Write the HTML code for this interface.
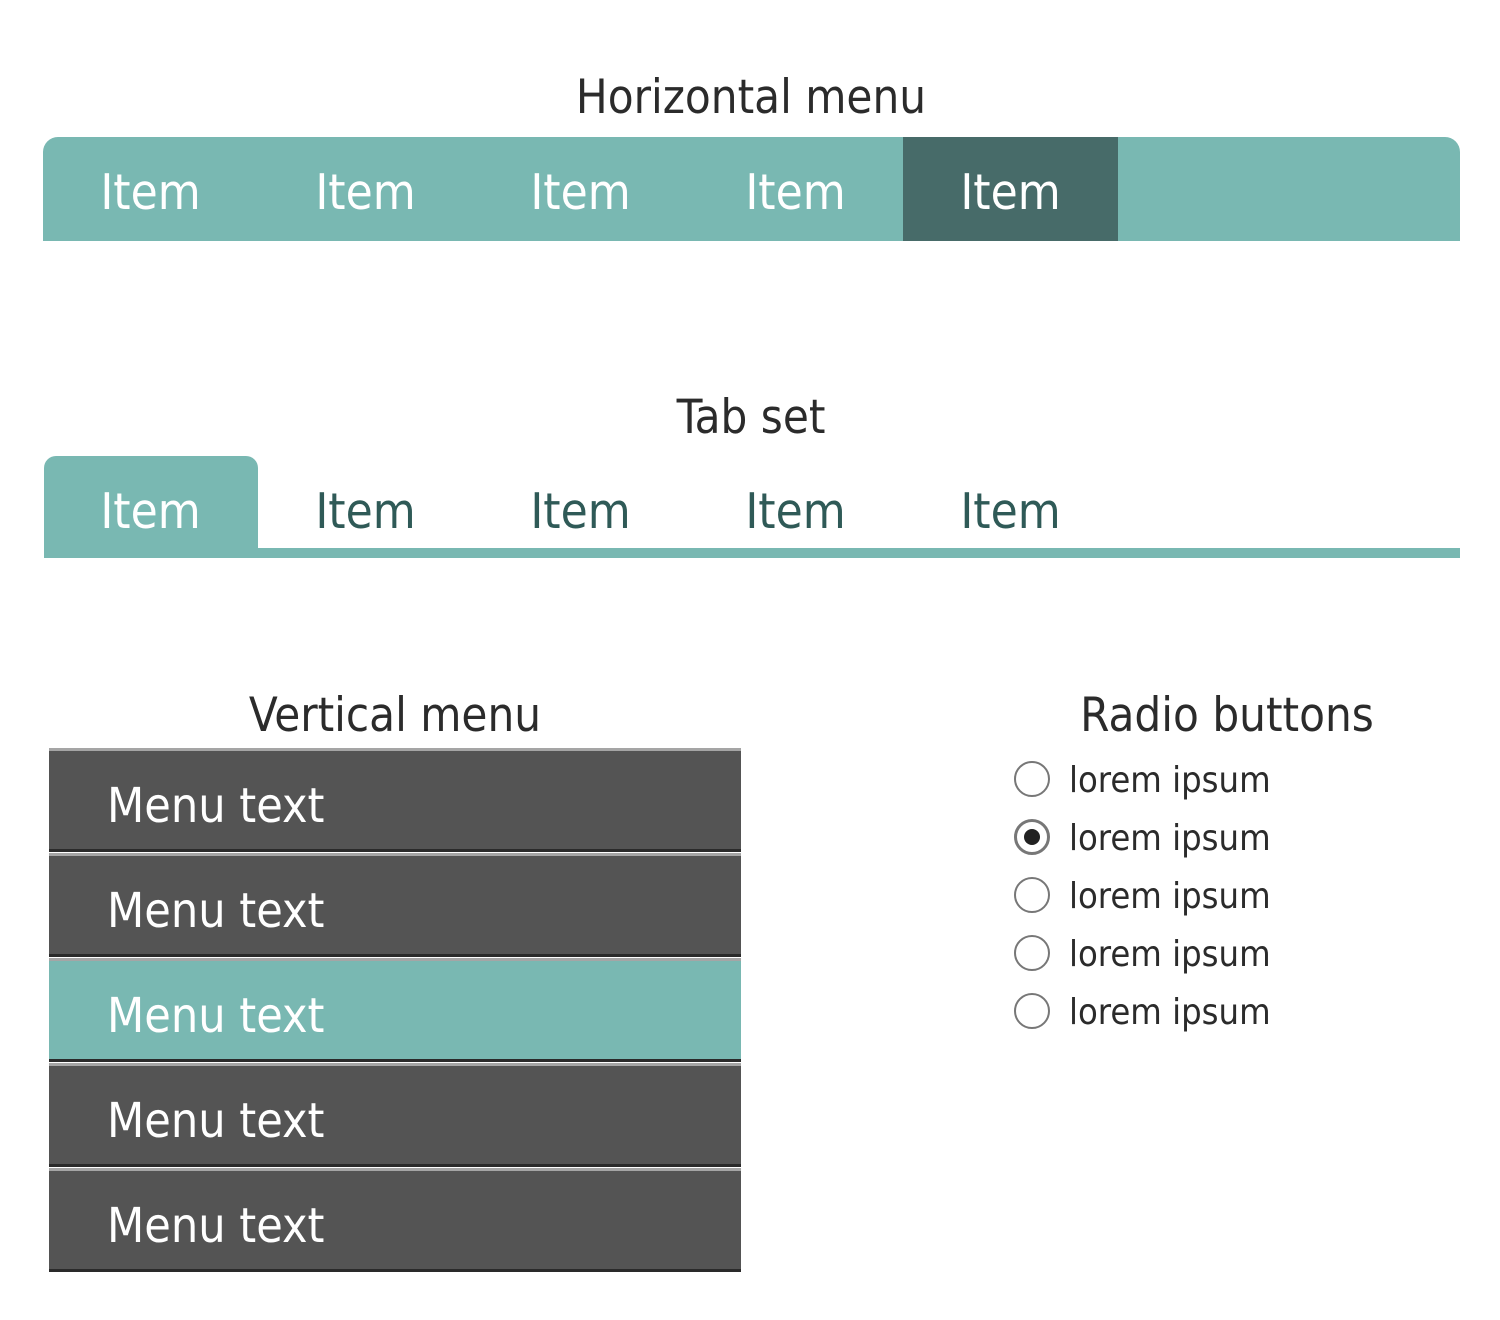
<!DOCTYPE html>
<html><head><style>
body{margin:0;width:1500px;height:1320px;background:#fff;position:relative;font-family:"DejaVu Sans Condensed","DejaVu Sans","Liberation Sans",sans-serif;overflow:hidden}
.a{position:absolute}
.t{position:absolute;color:#2b2b2b;font-size:47px;white-space:nowrap;transform:translateX(-50%);line-height:1}
.hi{position:absolute;top:141px;height:104px;width:215px;color:#fff;font-size:49px;line-height:104px;text-align:center}
.ti{position:absolute;top:460px;height:100px;width:215px;color:#2f5a57;font-size:49px;line-height:104px;text-align:center}
.vm{position:absolute;left:49px;width:692px;height:98px;background:#545454;border-top:3px solid #a5a5a5;border-bottom:3px solid #2a2a2a;color:#fff;font-size:48px;line-height:110px;box-sizing:content-box;overflow:hidden}
.vm span{margin-left:58px}
.r{position:absolute;left:1014px;width:36px;height:36px;border:2px solid #777;border-radius:50%;box-sizing:border-box}
.rl{position:absolute;left:1069px;font-size:36px;color:#2b2b2b;line-height:1}
</style></head><body>
<div class="t" style="left:751px;top:74px">Horizontal menu</div>
<div class="a" style="left:43px;top:137px;width:1417px;height:104px;background:#79b8b2;border-radius:15px 15px 0 0"></div>
<div class="a" style="left:903px;top:137px;width:215px;height:104px;background:#476b69"></div>
<div class="hi" style="left:43px">Item</div><div class="hi" style="left:258px">Item</div><div class="hi" style="left:473px">Item</div><div class="hi" style="left:688px">Item</div><div class="hi" style="left:903px">Item</div>

<div class="t" style="left:751px;top:394px">Tab set</div>
<div class="a" style="left:44px;top:456px;width:214px;height:102px;background:#79b8b2;border-radius:12px 12px 0 0"></div>
<div class="a" style="left:44px;top:548px;width:1416px;height:10px;background:#79b8b2"></div>
<div class="ti" style="left:43px;color:#fff">Item</div><div class="ti" style="left:258px">Item</div><div class="ti" style="left:473px">Item</div><div class="ti" style="left:688px">Item</div><div class="ti" style="left:903px">Item</div>

<div class="t" style="left:395px;top:692px">Vertical menu</div>
<div class="vm" style="top:748px"><span>Menu text</span></div>
<div class="vm" style="top:853px"><span>Menu text</span></div>
<div class="vm" style="top:958px;background:#79b8b2"><span>Menu text</span></div>
<div class="vm" style="top:1063px"><span>Menu text</span></div>
<div class="vm" style="top:1168px"><span>Menu text</span></div>

<div class="t" style="left:1227px;top:692px">Radio buttons</div>
<div class="r" style="top:761px"></div><div class="rl" style="top:763px">lorem ipsum</div>
<div class="r" style="top:819px;border:3px solid #777"><div class="a" style="left:7px;top:7px;width:16px;height:16px;border-radius:50%;background:#222"></div></div><div class="rl" style="top:821px">lorem ipsum</div>
<div class="r" style="top:877px"></div><div class="rl" style="top:879px">lorem ipsum</div>
<div class="r" style="top:935px"></div><div class="rl" style="top:937px">lorem ipsum</div>
<div class="r" style="top:993px"></div><div class="rl" style="top:995px">lorem ipsum</div>
</body></html>
